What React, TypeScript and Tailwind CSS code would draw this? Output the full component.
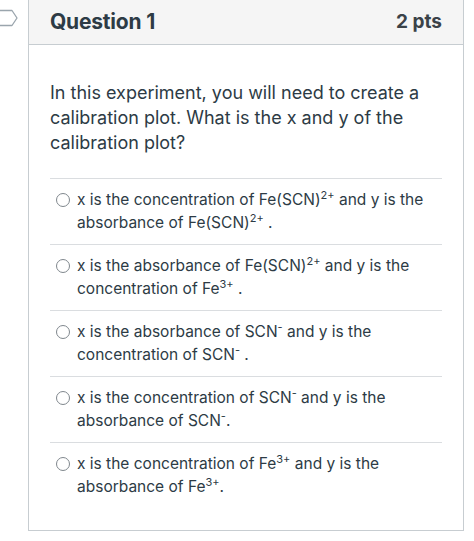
import React from 'react';

type Opt = React.ReactNode;

const Sup = ({ children }: { children: React.ReactNode }) => (
  <span className="relative -top-[6px] text-[11px] leading-none">{children}</span>
);

const options: Opt[] = [
  <>
    x is the concentration of Fe(SCN)<Sup>2+</Sup> and y is the absorbance of Fe(SCN)<Sup>2+</Sup> .
  </>,
  <>
    x is the absorbance of Fe(SCN)<Sup>2+</Sup> and y is the concentration of Fe<Sup>3+</Sup> .
  </>,
  <>
    x is the absorbance of SCN<Sup>-</Sup> and y is the concentration of SCN<Sup>-</Sup> .
  </>,
  <>
    x is the concentration of SCN<Sup>-</Sup> and y is the absorbance of SCN<Sup>-</Sup>.
  </>,
  <>
    x is the concentration of Fe<Sup>3+</Sup> and y is the absorbance of Fe<Sup>3+</Sup>.
  </>,
];

export default function App() {
  return (
    <div
      className="relative h-[541px] w-[474px] overflow-hidden bg-white"
      style={{ fontFamily: 'Inter, "Noto Sans", sans-serif' }}
    >
      <svg className="absolute left-0 top-[9px]" width="20" height="18" viewBox="0 0 20 18">
        <path d="M-2 1.5 H12 L17 9 L12 16.5 H-2" fill="none" stroke="#9aa5ad" strokeWidth="1.3" strokeLinejoin="round" />
      </svg>

      <div className="ml-[28px] h-[531px] w-[436px] border-x border-b border-[#c7cdd1]">
        <div className="flex h-[45px] items-center justify-between border-b border-[#c7cdd1] bg-[#f5f5f5] px-[21px]">
          <span className="text-[21px] font-bold tracking-[-0.2px] text-[#2d3b45]">Question 1</span>
          <span className="text-[19px] font-bold text-[#3a4248]">2 pts</span>
        </div>

        <div className="px-[21px] pt-[35px]">
          <p className="w-[385px] text-[18px] leading-[25px] text-[#2d3b45]">
            In this experiment, you will need to create a calibration plot. What is the x and y of the calibration plot?
          </p>

          <div className="mt-[23px]">
            {options.map((o, i) => (
              <div key={i} className="flex border-t border-[#dadde0] pb-[10px] pl-[6px] pt-[9px]">
                <span className="mr-[7px] mt-[5px] h-[14px] w-[14px] shrink-0 rounded-full border border-[#7f878d]" />
                <p className="w-[355px] text-[15.5px] leading-[23px] text-[#2d3b45]">{o}</p>
              </div>
            ))}
          </div>
        </div>
      </div>
    </div>
  );
}
